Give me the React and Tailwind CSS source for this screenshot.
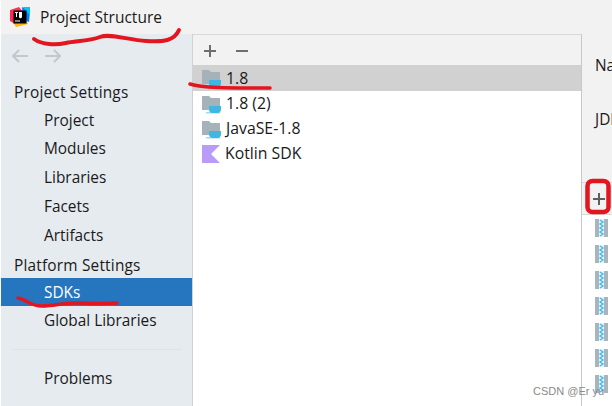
const font = { fontFamily: '"Open Sans","Noto Sans",sans-serif' };

function Folder() {
  return (
    <svg width="20" height="20" viewBox="0 0 20 20" className="shrink-0">
      <path d="M0 2h7l2 2h9v12H0z" fill="#a6b2ba" />
      <path d="M7 12h12v3a4 4 0 0 1-4 4h-4a4 4 0 0 1-4-4z" fill="#40b6e0" />
      <path d="M4 18h14v1.5H4z" fill="#40b6e0" opacity="0.5" />
    </svg>
  );
}

function Kotlin() {
  return (
    <svg width="18" height="18" viewBox="0 0 18 18" className="shrink-0">
      <path d="M0 0h18L9 9l9 9H0z" fill="#b99bf8" />
    </svg>
  );
}

function Jar() {
  return (
    <svg width="13" height="18" viewBox="0 0 13 18">
      <rect x="0" y="0" width="13" height="18" fill="#a9b5bd" />
      <rect x="4" y="0" width="5" height="18" fill="#e4f4fb" />
      <path d="M5 1l3 2-3 2 3 2-3 2 3 2-3 2 3 2-3 2" fill="none" stroke="#40b6e0" strokeWidth="1.3" />
    </svg>
  );
}

function Plus({ color = "#6e6e6e" }) {
  return (
    <svg width="14" height="14" viewBox="0 0 14 14">
      <path d="M7 1v12M1 7h12" stroke={color} strokeWidth="2" />
    </svg>
  );
}

const Item = ({ children, h = "h-[29px]" }) => (
  <div className={`${h} flex items-center pl-[43px] pt-px text-[15.4px] text-[#1a1a1a]`}>{children}</div>
);

const Head = ({ children, h = "h-[29px]", extra = "" }) => (
  <div className={`${h} ${extra} flex items-center pl-[13px] text-[15.4px] tracking-[0.2px] text-[#1a1a1a]`}>{children}</div>
);

export default function App() {
  return (
    <div className="relative w-[612px] h-[406px] overflow-hidden bg-white flex flex-col" style={font}>
      <div className="h-[34px] ml-px bg-[#f2f2f2] flex items-center pl-[9px] gap-[10px] shrink-0">
        <svg width="20" height="20" viewBox="0 0 20 20">
          <path d="M0 3l9-3 4 5-5 7H2z" fill="#fe315d" />
          <path d="M12 0l8 4-1 11-6-2z" fill="#087cfa" />
          <path d="M13 0h7v9z" fill="#07c3f2" />
          <path d="M0 10l6 10 12-3-5-9z" fill="#fdb60d" />
          <path d="M0 3l5 0 0 14-5-3z" fill="#fe2857" />
          <rect x="3.5" y="3.5" width="13" height="13" fill="#000" />
          <path d="M5 5h3v1H7v4H6V6H5zM5 10h3M9 5h3v4.5a1.5 1.5 0 0 1-3 .4" fill="#fff" />
          <rect x="5" y="13.5" width="5" height="1" fill="#fff" />
        </svg>
        <span className="text-[15.5px] pt-px text-[#1a1a1a]">Project Structure</span>
      </div>
      <div className="flex flex-1 min-h-0 ml-px">
        <div className="w-[191px] bg-[#e6ebf0] flex flex-col shrink-0 border-r border-[#d1d1d1] box-content">
          <div className="h-[44px] flex items-center pl-[10px] gap-[15px]">
            <svg width="18" height="14" viewBox="0 0 18 14"><path d="M17 7H2M8 1L2 7l6 6" fill="none" stroke="#c4c8cb" strokeWidth="2" /></svg>
            <svg width="18" height="14" viewBox="0 0 18 14"><path d="M1 7h15M10 1l6 6-6 6" fill="none" stroke="#c4c8cb" strokeWidth="2" /></svg>
          </div>
          <Head>Project Settings</Head>
          <Item h="h-[27px]">Project</Item>
          <Item>Modules</Item>
          <Item>Libraries</Item>
          <Item>Facets</Item>
          <Item>Artifacts</Item>
          <Head h="h-[28px]" extra="pt-[3px]">Platform Settings</Head>
          <div className="h-[28px] flex items-center pl-[43px] pt-px text-[15.4px] text-white bg-[#2675bf]">SDKs</div>
          <Item>Global Libraries</Item>
          <div className="h-[29px] flex items-center px-[10px]"><div className="h-px w-full bg-[#dfe3e7]" /></div>
          <Item h="h-[28px]">Problems</Item>
        </div>
        <div className="w-[388px] flex flex-col shrink-0 bg-white">
          <div className="h-[31px] bg-[#f2f2f2] flex items-center pl-[10px] pt-[2px] gap-[18px] border-t border-[#d8d8d8]">
            <Plus />
            <svg width="14" height="14" viewBox="0 0 14 14"><path d="M1 7h12" stroke="#6e6e6e" strokeWidth="2" /></svg>
          </div>
          <div className="flex flex-col pl-[9px]">
            <div className="h-[26px] -ml-[9px] pl-[9px] flex items-center gap-[4px] bg-[#d1d1d1]">
              <Folder /><span className="text-[15.8px] pt-px text-[#1a1a1a]">1.8</span>
            </div>
            <div className="h-[25px] flex items-center gap-[4px]"><Folder /><span className="text-[15.8px] text-[#1a1a1a]">1.8 (2)</span></div>
            <div className="h-[25px] flex items-center gap-[4px]"><Folder /><span className="text-[15.8px] text-[#1a1a1a]">JavaSE-1.8</span></div>
            <div className="h-[25px] flex items-center gap-[5px]"><Kotlin /><span className="text-[15.8px] text-[#1a1a1a]">Kotlin SDK</span></div>
          </div>
        </div>
        <div className="flex-1 min-w-0 flex flex-col border-l border-[#c8c8c8] bg-[#f2f2f2] overflow-hidden">
          <div className="h-[148px] shrink-0 pl-[13px] pt-[20px] text-[15.4px] text-[#1a1a1a] whitespace-nowrap flex flex-col gap-[31px]">
            <span>Name:</span>
            <span>JDK home path:</span>
          </div>
          <div className="h-[31px] shrink-0 flex items-center pl-[10px] border-t border-b border-[#d8d8d8] box-content"><Plus color="#5f5f5f" /></div>
          <div className="flex-1 bg-white flex flex-col items-start pl-[13px] pt-[4px] gap-[8px]">
            {[0, 1, 2, 3, 4, 5, 6].map((i) => <Jar key={i} />)}
          </div>
        </div>
      </div>
      <span className="absolute left-[533px] top-[384px] text-[11px] leading-[14px] text-[#8a8a8a]" style={{ fontFamily: '"Liberation Sans",sans-serif' }}>CSDN @Er yu</span>
      <svg className="absolute inset-0 pointer-events-none" width="612" height="406" fill="none" stroke="#e3151f" strokeLinecap="round" strokeLinejoin="round">
        <path d="M34 39C42 45 56 45 66 43S90 41 100 37 128 40 146 41 174 41 179 30" strokeWidth="4" />
        <path d="M190 84C202 88 226 88 270 88" strokeWidth="3.5" />
        <path d="M18 298C26 299 30 306 42 306S62 303 75 303 100 304 117 303" strokeWidth="3.5" />
        <rect x="587.5" y="181" width="21" height="31" rx="5" strokeWidth="4.5" />
      </svg>
    </div>
  );
}
